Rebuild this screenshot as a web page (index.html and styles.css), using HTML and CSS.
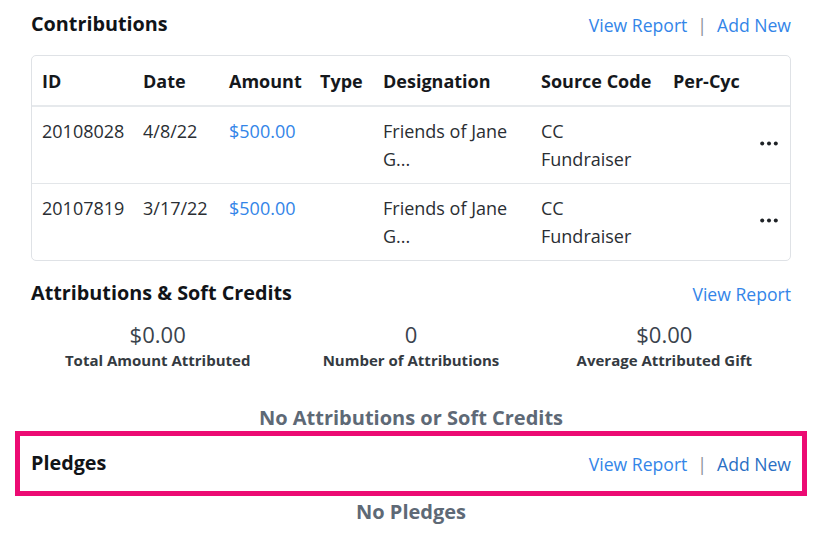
FILE: index.html
```html
<!DOCTYPE html>
<html lang="en">
<head>
<meta charset="utf-8">
<title>Contributions</title>
<link rel="stylesheet" href="styles.css">
</head>
<body>
<main class="page">
  <section class="section">
    <div class="section-head">
      <h2 class="section-title">Contributions</h2>
      <div class="section-links">
        <a class="link" href="#">View Report</a><span class="sep">|</span><a class="link" href="#">Add New</a>
      </div>
    </div>
    <div class="card">
      <table class="grid">
        <colgroup>
          <col class="c-id"><col class="c-date"><col class="c-amount"><col class="c-type"><col class="c-desig"><col class="c-source"><col class="c-cyc"><col class="c-act">
        </colgroup>
        <thead>
          <tr>
            <th>ID</th><th>Date</th><th>Amount</th><th>Type</th><th>Designation</th><th>Source Code</th><th>Per-Cyc</th><th></th>
          </tr>
        </thead>
        <tbody>
          <tr>
            <td>20108028</td><td>4/8/22</td><td><a class="link" href="#">$500.00</a></td><td></td><td>Friends of Jane G...</td><td>CC Fundraiser</td><td></td>
            <td class="act"><svg class="dots" width="18" height="5" viewBox="0 0 18 5" aria-hidden="true"><circle cx="2.2" cy="2.5" r="2"/><circle cx="9" cy="2.5" r="2"/><circle cx="15.8" cy="2.5" r="2"/></svg></td>
          </tr>
          <tr>
            <td>20107819</td><td>3/17/22</td><td><a class="link" href="#">$500.00</a></td><td></td><td>Friends of Jane G...</td><td>CC Fundraiser</td><td></td>
            <td class="act"><svg class="dots" width="18" height="5" viewBox="0 0 18 5" aria-hidden="true"><circle cx="2.2" cy="2.5" r="2"/><circle cx="9" cy="2.5" r="2"/><circle cx="15.8" cy="2.5" r="2"/></svg></td>
          </tr>
        </tbody>
      </table>
    </div>
  </section>

  <section class="section">
    <div class="section-head attr-head">
      <h2 class="section-title">Attributions &amp; Soft Credits</h2>
      <div class="section-links">
        <a class="link" href="#">View Report</a>
      </div>
    </div>
    <div class="stats">
      <div class="stat"><div class="stat-value">$0.00</div><div class="stat-label">Total Amount Attributed</div></div>
      <div class="stat"><div class="stat-value">0</div><div class="stat-label">Number of Attributions</div></div>
      <div class="stat"><div class="stat-value">$0.00</div><div class="stat-label">Average Attributed Gift</div></div>
    </div>
    <p class="empty empty-attr">No Attributions or Soft Credits</p>
  </section>

  <section class="section">
    <div class="section-head highlight">
      <h2 class="section-title">Pledges</h2>
      <div class="section-links">
        <a class="link" href="#">View Report</a><span class="sep">|</span><a class="link link-dark" href="#">Add New</a>
      </div>
    </div>
    <p class="empty empty-pledges">No Pledges</p>
  </section>
</main>
</body>
</html>
```

FILE: styles.css
```css
* { box-sizing: border-box; }

html, body {
  margin: 0;
  padding: 0;
  background: #ffffff;
}

body {
  font-family: "Open Sans", "Noto Sans", "Liberation Sans", sans-serif;
  font-size: 18px;
  line-height: 28px;
  color: #212529;
}

.page {
  width: 760px;
  margin-left: 31px;
  padding-top: 10px;
}

.section-head {
  display: flex;
  justify-content: space-between;
  align-items: center;
  height: 28px;
}

.section-title {
  margin: 0;
  font-size: 19.8px;
  line-height: 28px;
  font-weight: 700;
  color: #111418;
}

.section-links {
  display: flex;
  align-items: center;
  font-size: 17.6px;
  line-height: 28px;
  padding-top: 2px;
}

.link {
  color: #3385e8;
  text-decoration: none;
}

.link-dark {
  color: #2a6fc4;
}

.sep {
  color: #8a8f96;
  margin: 0 10px;
}

.card {
  margin-top: 17px;
  border: 1px solid #dfe2e6;
  border-radius: 5px;
  overflow: hidden;
}

.grid {
  width: 100%;
  border-collapse: collapse;
  table-layout: fixed;
}

.c-id { width: 101px; }
.c-date { width: 86px; }
.c-amount { width: 91px; }
.c-type { width: 63px; }
.c-desig { width: 158px; }
.c-source { width: 132px; }
.c-cyc { width: 85px; }
.c-act { width: 42px; }

.grid th {
  text-align: left;
  font-weight: 700;
  color: #15181c;
  white-space: nowrap;
  padding: 11px 10px 10px;
  border-bottom: 2px solid #e6e9ec;
}

.grid td {
  vertical-align: top;
  padding: 10px 10px;
  color: #2a2e33;
}

.grid tbody tr + tr td {
  border-top: 1px solid #e3e6e9;
}

.grid td.act {
  vertical-align: middle;
  padding-right: 12px;
}

.dots {
  display: block;
  margin: 0 0 3px auto;
  fill: #1e2226;
}

.attr-head {
  margin-top: 18px;
}

.stats {
  display: grid;
  grid-template-columns: repeat(3, 1fr);
  margin-top: 12px;
  text-align: center;
}

.stat-value {
  font-size: 22px;
  line-height: 30px;
  color: #3a434d;
}

.stat-label {
  font-size: 15px;
  line-height: 20px;
  font-weight: 700;
  color: #343a41;
  padding-top: 1px;
}

.empty {
  margin: 0;
  text-align: center;
  font-size: 20px;
  line-height: 28px;
  font-weight: 700;
  color: #5e6976;
}

.empty-attr {
  margin-top: 34px;
}

.highlight {
  height: auto;
  margin: -1px -16px 0;
  padding: 12px 11px 13px;
  border: 5px solid #ec0b73;
}

.empty-pledges {
  margin-top: 2px;
}
```
